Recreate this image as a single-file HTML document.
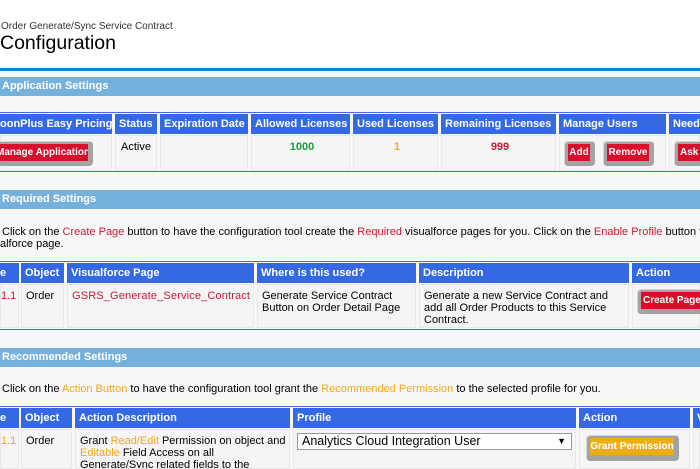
<!DOCTYPE html>
<html><head><style>
*{margin:0;padding:0;box-sizing:border-box}
body{width:700px;height:467px;overflow:hidden;background:#f7f7f7;font-family:"Liberation Sans",Arial,sans-serif;font-size:11px;color:#000;position:relative}
.a{position:absolute}
.top{left:0;top:0;width:700px;height:68px;background:#fff}
.bar{left:0;width:700px;height:19px;background:#76b1dc;color:#fff;font-weight:bold;font-size:11px;line-height:19px;padding-left:2px}
.line{left:0;width:700px;height:1px;background:#3f6fd9}
.h{background:#3569e4;color:#fff;font-weight:bold;font-size:11px;padding:4px 0 0 4px;white-space:nowrap;overflow:hidden}
.c{background:#f5f5f5;border:1px solid #e8e8e8;font-size:11px;padding:5px 1px 5px 4px;line-height:12px;overflow:hidden;white-space:nowrap}
.w{white-space:normal}
.btn{background:#a3a3a3;border-radius:4px;box-shadow:inset 1px 1px 0 #d8d8d8;padding:3px 5px 5px 4px}
.btn span{display:block;background:#d80f2b;color:#fff;font-weight:bold;font-size:10px;line-height:17px;padding:0 2px;white-space:nowrap;text-align:center;overflow:hidden}
.red{color:#d01733}.or{color:#f0a81c}
.b{font-weight:bold}
</style></head><body>
<div class="a top"></div>
<div class="a" style="left:1px;top:21px;font-size:10px;color:#333">Order Generate/Sync Service Contract</div>
<div class="a" style="left:0;top:32px;font-size:19.5px;color:#000">Configuration</div>
<div class="a" style="left:0;top:68px;width:700px;height:3px;background:#0a86d4"></div>

<div class="a bar" style="top:77px">Application Settings</div>
<div class="a line" style="top:112px"></div>
<div class="a h" style="left:0;top:114px;width:112px;height:20px;padding-left:0">oonPlus Easy Pricing</div>
<div class="a h" style="left:115px;top:114px;width:42px;height:20px">Status</div>
<div class="a h" style="left:160px;top:114px;width:88px;height:20px">Expiration Date</div>
<div class="a h" style="left:251px;top:114px;width:99px;height:20px">Allowed Licenses</div>
<div class="a h" style="left:353px;top:114px;width:85px;height:20px">Used Licenses</div>
<div class="a h" style="left:441px;top:114px;width:115px;height:20px">Remaining Licenses</div>
<div class="a h" style="left:559px;top:114px;width:107px;height:20px">Manage Users</div>
<div class="a h" style="left:669px;top:114px;width:31px;height:20px">Need</div>
<div class="a c" style="left:0;top:135px;width:112px;height:36px"></div>
<div class="a c" style="left:115px;top:135px;width:42px;height:36px;padding-left:5px">Active</div>
<div class="a c" style="left:160px;top:135px;width:88px;height:36px"></div>
<div class="a c b" style="left:251px;top:135px;width:99px;height:36px;text-align:center;color:#1a9a3a">1000</div>
<div class="a c b" style="left:353px;top:135px;width:85px;height:36px;text-align:center;color:#f0a81c">1</div>
<div class="a c b" style="left:441px;top:135px;width:115px;height:36px;text-align:center;color:#d01733">999</div>
<div class="a c" style="left:559px;top:135px;width:107px;height:36px"></div>
<div class="a c" style="left:669px;top:135px;width:31px;height:36px"></div>
<div class="a line" style="top:171px"></div>
<div class="a btn" style="left:-8px;top:141px;width:101px;height:25px"><span style="padding:0;text-align:right;padding-right:1px">Manage Application</span></div>
<div class="a btn" style="left:564px;top:141px;width:31px;height:25px"><span style="padding:0">Add</span></div>
<div class="a btn" style="left:603px;top:141px;width:51px;height:25px"><span style="padding:0">Remove</span></div>
<div class="a btn" style="left:674px;top:141px;width:34px;height:25px"><span style="text-align:left">Ask</span></div>

<div class="a bar" style="top:190px">Required Settings</div>
<div class="a" style="left:2px;top:226px;font-size:11px;line-height:12px;white-space:nowrap">Click on the <span class="red">Create Page</span> button to have the configuration tool create the <span class="red">Required</span> visualforce pages for you. Click on the <span class="red">Enable Profile</span> button to</div>
<div class="a" style="left:0;top:238px;font-size:11px">alforce page.</div>
<div class="a line" style="top:261px"></div>
<div class="a h" style="left:0;top:263px;width:19px;height:20px;padding-left:0">e</div>
<div class="a h" style="left:21px;top:263px;width:43px;height:20px">Object</div>
<div class="a h" style="left:67px;top:263px;width:187px;height:20px">Visualforce Page</div>
<div class="a h" style="left:257px;top:263px;width:159px;height:20px">Where is this used?</div>
<div class="a h" style="left:419px;top:263px;width:210px;height:20px">Description</div>
<div class="a h" style="left:632px;top:263px;width:68px;height:20px">Action</div>
<div class="a c red" style="left:0;top:284px;width:19px;height:44px;padding-left:0">1.1</div>
<div class="a c" style="left:21px;top:284px;width:43px;height:44px">Order</div>
<div class="a c red" style="left:67px;top:284px;width:187px;height:44px;letter-spacing:0.15px">GSRS_Generate_Service_Contract</div>
<div class="a c w" style="left:257px;top:284px;width:159px;height:44px">Generate Service Contract Button on Order Detail Page</div>
<div class="a c w" style="left:419px;top:284px;width:210px;height:44px">Generate a new Service Contract and add all Order Products to this Service Contract.</div>
<div class="a c" style="left:632px;top:284px;width:68px;height:44px"></div>
<div class="a line" style="top:329px"></div>
<div class="a btn" style="left:637px;top:289px;width:75px;height:25px"><span style="text-align:left">Create Page</span></div>

<div class="a bar" style="top:348px">Recommended Settings</div>
<div class="a" style="left:2px;top:383px;font-size:11px;white-space:nowrap">Click on the <span class="or">Action Button</span> to have the configuration tool grant the <span class="or">Recommended Permission</span> to the selected profile for you.</div>
<div class="a line" style="top:406px"></div>
<div class="a h" style="left:0;top:408px;width:19px;height:20px;padding-left:0">e</div>
<div class="a h" style="left:21px;top:408px;width:51px;height:20px">Object</div>
<div class="a h" style="left:75px;top:408px;width:215px;height:20px">Action Description</div>
<div class="a h" style="left:293px;top:408px;width:283px;height:20px">Profile</div>
<div class="a h" style="left:579px;top:408px;width:111px;height:20px">Action</div>
<div class="a h" style="left:693px;top:408px;width:7px;height:20px">V</div>
<div class="a c or" style="left:0;top:429px;width:19px;height:40px;padding-left:0">1.1</div>
<div class="a c" style="left:21px;top:429px;width:51px;height:40px">Order</div>
<div class="a c" style="left:75px;top:429px;width:215px;height:40px;padding-right:0">Grant <span class="or">Read/Edit</span> Permission on object and<br><span class="or">Editable</span> Field Access on all<br>Generate/Sync related fields to the</div>
<div class="a c" style="left:293px;top:429px;width:283px;height:40px"></div>
<div class="a c" style="left:579px;top:429px;width:111px;height:40px"></div>
<div class="a c" style="left:693px;top:429px;width:7px;height:40px"></div>
<div class="a" style="left:297px;top:433px;width:275px;height:17px;background:#fff;border:1px solid #999;font-size:12.5px;line-height:15px;padding-left:4px">Analytics Cloud Integration User<span style="position:absolute;right:5px;font-size:9px;color:#000">▼</span></div>
<div class="a btn" style="left:586px;top:435px;width:93px;height:26px;"><span style="background:#efad14;padding:0">Grant Permission</span></div>
</body></html>
